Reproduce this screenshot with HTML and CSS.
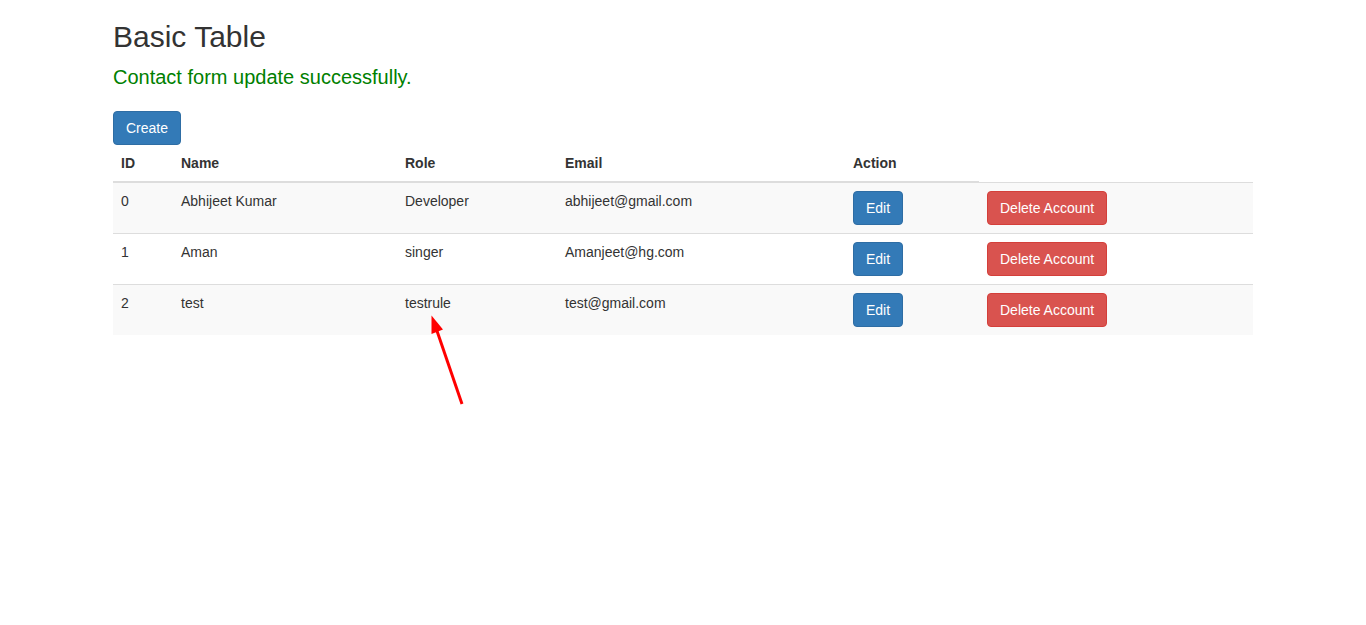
FILE: index.html
```html
<!DOCTYPE html>
<html>
<head>
<meta charset="utf-8">
<title>Basic Table</title>
<link rel="stylesheet" href="styles.css">
</head>
<body>
<div class="container">
  <h2 class="title">Basic Table</h2>
  <p class="msg">Contact form update successfully.</p>
  <button class="btn btn-primary">Create</button>
  <table class="table">
    <colgroup>
      <col class="c-id"><col class="c-name"><col class="c-role"><col class="c-email"><col class="c-edit"><col class="c-del">
    </colgroup>
    <thead>
      <tr><th>ID</th><th>Name</th><th>Role</th><th>Email</th><th>Action</th></tr>
    </thead>
    <tbody>
      <tr class="odd"><td>0</td><td>Abhijeet Kumar</td><td>Developer</td><td>abhijeet@gmail.com</td><td><button class="btn btn-primary">Edit</button></td><td><button class="btn btn-danger">Delete Account</button></td></tr>
      <tr><td>1</td><td>Aman</td><td>singer</td><td>Amanjeet@hg.com</td><td><button class="btn btn-primary">Edit</button></td><td><button class="btn btn-danger">Delete Account</button></td></tr>
      <tr class="odd"><td>2</td><td>test</td><td>testrule</td><td>test@gmail.com</td><td><button class="btn btn-primary">Edit</button></td><td><button class="btn btn-danger">Delete Account</button></td></tr>
    </tbody>
  </table>
</div>
<svg class="arrow" width="1366" height="625" viewBox="0 0 1366 625" xmlns="http://www.w3.org/2000/svg">
  <polygon points="463.4,403.5 460.6,404.5 434.6,328.5 437.4,327.5" fill="#ff0000"/>
  <polygon points="431.5,315.5 431.5,334 443,329.5" fill="#ff0000"/>
</svg>
</body>
</html>
```
FILE: styles.css
```css
html, body {
  margin: 0;
  padding: 0;
  background: #fff;
}
body {
  font-family: "Liberation Sans", Arial, Helvetica, sans-serif;
  font-size: 14px;
  line-height: 20px;
  color: #333;
  position: relative;
  min-height: 625px;
}
.container {
  width: 1140px;
  margin: 0 auto;
  padding: 0 15px;
}
.title {
  font-size: 30px;
  font-weight: 500;
  line-height: 33px;
  margin: 20px 0 10px;
  color: #333;
}
.msg {
  font-size: 20px;
  line-height: 28px;
  color: #008000;
  margin: 0 0 20px;
}
.btn {
  display: inline-block;
  font-family: inherit;
  font-size: 14px;
  line-height: 20px;
  padding: 6px 12px;
  border: 1px solid transparent;
  border-radius: 4px;
  color: #fff;
  cursor: pointer;
  vertical-align: top;
  margin: 0;
}
.btn-primary {
  background: #337ab7;
  border-color: #2e6da4;
}
.btn-danger {
  background: #d9534f;
  border-color: #d43f3a;
}
.table {
  width: 100%;
  table-layout: fixed;
  border-collapse: collapse;
  border-spacing: 0;
}
.c-id { width: 60px; }
.c-name { width: 224px; }
.c-role { width: 160px; }
.c-email { width: 288px; }
.c-edit { width: 134px; }
.c-del { width: 274px; }
.table th {
  text-align: left;
  font-weight: bold;
  padding: 8px;
  line-height: 20px;
  vertical-align: bottom;
  border-bottom: 2px solid #ddd;
}
.table td {
  padding: 8px;
  line-height: 20px;
  vertical-align: top;
  border-top: 1px solid #ddd;
}
.table tbody tr.odd {
  background: #f9f9f9;
}
.arrow {
  position: absolute;
  left: 0;
  top: 0;
  display: block;
  pointer-events: none;
}
```
